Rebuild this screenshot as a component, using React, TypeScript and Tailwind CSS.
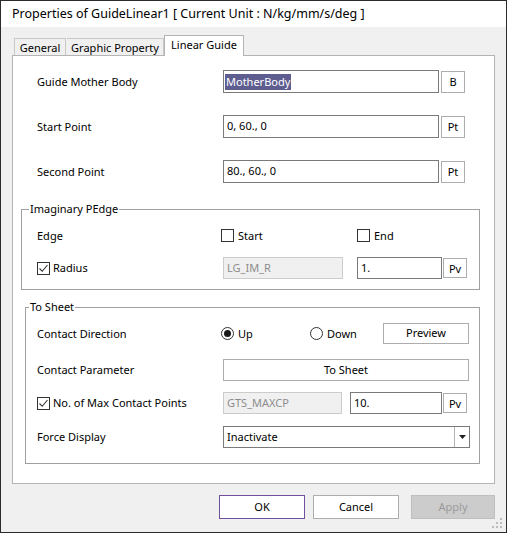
import React from "react";

const font = { fontFamily: '"Noto Sans", "Open Sans", Arial, sans-serif' };

function CheckBox({ checked }: { checked?: boolean }) {
  return (
    <div className="w-[13px] h-[13px] border border-[#333333] bg-white flex items-center justify-center shrink-0">
      {checked && (
        <svg width="11" height="11" viewBox="0 0 11 11">
          <path d="M1.5 5.5 L4.2 8.3 L9.5 2" stroke="#333" strokeWidth="1.1" fill="none" />
        </svg>
      )}
    </div>
  );
}

function Radio({ checked }: { checked?: boolean }) {
  return (
    <div className="w-[13px] h-[13px] rounded-full border border-[#333333] bg-white flex items-center justify-center shrink-0">
      {checked && <div className="w-[7px] h-[7px] rounded-full bg-[#1a1a1a]" />}
    </div>
  );
}

function SmallBtn({ label }: { label: string }) {
  return (
    <div className="w-[24px] h-[22px] border border-[#adadad] bg-white flex items-center justify-center leading-none shrink-0">
      {label}
    </div>
  );
}

function Field({ value, w, h = "h-[23px]" }: { value: string; w: string; h?: string }) {
  return (
    <div className={`${w} ${h} border border-[#7a7a7a] bg-white flex items-center pl-[3px] shrink-0`}>
      {value}
    </div>
  );
}

function DisabledField({ value, w }: { value: string; w: string }) {
  return (
    <div className={`${w} h-[22px] border border-[#cccccc] bg-[#f0f0f0] flex items-center pl-[3px] text-[#8c8c8c] shrink-0`}>
      {value}
    </div>
  );
}

export default function App() {
  return (
    <div style={font} className="relative w-[507px] h-[533px] border border-[#2b2b2b] bg-[#f0f0f0] flex flex-col text-black overflow-hidden text-[11px]">
      {/* Title bar */}
      <div className="h-[26px] bg-white flex items-center pl-[11px] pt-[1px] text-[12.5px] leading-none shrink-0">
        Properties of GuideLinear1 [ Current Unit : N/kg/mm/s/deg ]
      </div>

      <div className="px-[11px] flex flex-col">
        {/* Tabs */}
        <div className="mt-[9px] h-[19px] flex items-end pl-[2px]">
          <div className="w-[52px] h-[17px] border-t border-l border-r border-[#c8c8c8] bg-[#f0f0f0] flex items-center justify-center leading-none">
            General
          </div>
          <div className="ml-[1px] w-[97px] h-[17px] border-t border-r border-[#c8c8c8] bg-[#f0f0f0] flex items-center justify-center leading-none">
            Graphic Property
          </div>
          <div className="relative z-10 -mb-[1px] w-[80px] h-[21px] border-t border-l border-r border-[#b4b4b4] bg-white flex items-start pt-[3px] justify-center leading-none">
            <span>Linear Guide</span>
          </div>
        </div>

        {/* Panel */}
        <div className="w-[483px] h-[429px] border border-[#b4b4b4] bg-white flex flex-col">
          {/* Row 1 */}
          <div className="mt-[14px] flex items-center pl-[24px]">
            <div className="w-[186px] pt-[1px]">Guide Mother Body</div>
            <div className="w-[216px] h-[23px] border border-[#7a7a7a] bg-white flex items-center pl-[1px] shrink-0">
              <span className="bg-[#5d5d90] text-white px-[1px] leading-[16px]">MotherBody</span>
            </div>
            <div className="ml-[2px]">
              <SmallBtn label="B" />
            </div>
          </div>
          {/* Row 2 */}
          <div className="mt-[22px] flex items-center pl-[24px]">
            <div className="w-[186px] pt-[1px]">Start Point</div>
            <Field value="0, 60., 0" w="w-[216px]" />
            <div className="ml-[2px]">
              <SmallBtn label="Pt" />
            </div>
          </div>
          {/* Row 3 */}
          <div className="mt-[22px] flex items-center pl-[24px]">
            <div className="w-[186px] pt-[1px]">Second Point</div>
            <Field value="80., 60., 0" w="w-[216px]" />
            <div className="ml-[2px]">
              <SmallBtn label="Pt" />
            </div>
          </div>

          {/* Group 1 */}
          <div className="relative mt-[26px] ml-[8px] w-[459px] h-[81px] border border-[#a0a0a0] flex flex-col">
            <div className="absolute -top-[9px] left-[7px] bg-white px-[1px] leading-[16px]">Imaginary PEdge</div>
            <div className="mt-[19px] h-[13px] flex items-center pl-[15px]">
              <div className="w-[184px] pt-[1px]">Edge</div>
              <div className="w-[136px] flex items-center">
                <CheckBox />
                <span className="ml-[4px] pt-[1px]">Start</span>
              </div>
              <div className="flex items-center">
                <CheckBox />
                <span className="ml-[4px] pt-[1px]">End</span>
              </div>
            </div>
            <div className="mt-[15px] flex items-center pl-[15px]">
              <div className="w-[186px] flex items-center">
                <CheckBox checked />
                <span className="ml-[3px] pt-[1px]">Radius</span>
              </div>
              <DisabledField value="LG_IM_R" w="w-[120px]" />
              <div className="ml-[14px]">
                <Field value="1." w="w-[85px]" h="h-[22px]" />
              </div>
              <div className="ml-[1px] w-[24px] h-[20px] border border-[#adadad] bg-white flex items-center justify-center leading-none">
                Pv
              </div>
            </div>
          </div>

          {/* Group 2 */}
          <div className="relative mt-[17px] ml-[12px] w-[455px] h-[157px] border border-[#a0a0a0] flex flex-col">
            <div className="absolute -top-[9px] left-[3px] bg-white px-[1px] leading-[16px]">To Sheet</div>
            <div className="mt-[15px] h-[21px] flex items-center pl-[11px]">
              <div className="w-[184px] pt-[1px]">Contact Direction</div>
              <div className="w-[89px] flex items-center">
                <Radio checked />
                <span className="ml-[4px] pt-[1px]">Up</span>
              </div>
              <div className="w-[73px] flex items-center">
                <Radio />
                <span className="ml-[4px] pt-[1px]">Down</span>
              </div>
              <div className="w-[86px] h-[21px] border border-[#adadad] bg-white flex items-center justify-center">
                Preview
              </div>
            </div>
            <div className="mt-[15px] flex items-center pl-[11px]">
              <div className="w-[186px] pt-[1px]">Contact Parameter</div>
              <div className="w-[246px] h-[22px] border border-[#adadad] bg-white flex items-center justify-center">
                To Sheet
              </div>
            </div>
            <div className="mt-[11px] flex items-center pl-[11px]">
              <div className="w-[186px] flex items-center">
                <CheckBox checked />
                <span className="ml-[3px] pt-[1px]">No. of Max Contact Points</span>
              </div>
              <DisabledField value="GTS_MAXCP" w="w-[119px]" />
              <div className="ml-[8px]">
                <Field value="10." w="w-[92px]" h="h-[22px]" />
              </div>
              <div className="ml-[1px] w-[24px] h-[20px] border border-[#adadad] bg-white flex items-center justify-center leading-none">
                Pv
              </div>
            </div>
            <div className="mt-[12px] flex items-center pl-[11px]">
              <div className="w-[186px] pt-[1px]">Force Display</div>
              <div className="w-[247px] h-[22px] border border-[#7a7a7a] bg-white flex items-center">
                <div className="flex-1 pl-[3px]">Inactivate</div>
                <div className="w-[15px] h-full border-l border-[#b4b4b4] flex items-center justify-center">
                  <svg width="7" height="4" viewBox="0 0 7 4">
                    <path d="M0 0 L7 0 L3.5 4 Z" fill="#222" />
                  </svg>
                </div>
              </div>
            </div>
          </div>
        </div>

        {/* Bottom buttons */}
        <div className="mt-[11px] flex items-center">
          <div className="ml-[207px] w-[86px] h-[24px] border border-[#70509a] bg-white flex items-center justify-center">
            OK
          </div>
          <div className="ml-[8px] w-[86px] h-[24px] border border-[#adadad] bg-white flex items-center justify-center">
            Cancel
          </div>
          <div className="ml-[12px] w-[84px] h-[24px] border border-[#bfbfbf] bg-[#cccccc] text-[#9a9a9a] flex items-center justify-center">
            Apply
          </div>
        </div>
      </div>

      {/* size grip */}
      <svg className="absolute right-[4px] bottom-[4px]" width="11" height="11" viewBox="0 0 11 11">
        {[
          [9, 1], [9, 5], [5, 5], [9, 9], [5, 9], [1, 9],
        ].map(([x, y], i) => (
          <rect key={i} x={x} y={y} width="2" height="2" fill="#bcbcbc" />
        ))}
      </svg>
    </div>
  );
}
